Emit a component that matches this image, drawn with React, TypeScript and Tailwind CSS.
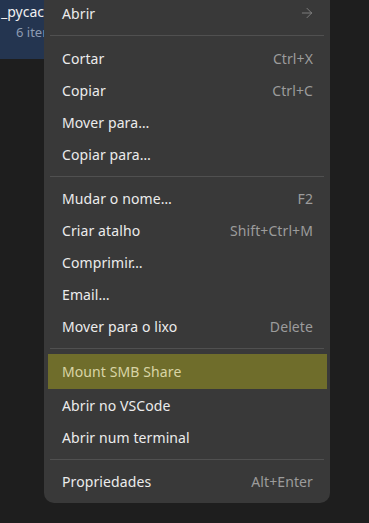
import { ArrowRight } from "lucide-react";

type Item = { label: string; shortcut?: string; active?: boolean; arrow?: boolean };

const groups: Item[][] = [
  [{ label: "Abrir", arrow: true }],
  [
    { label: "Cortar", shortcut: "Ctrl+X" },
    { label: "Copiar", shortcut: "Ctrl+C" },
    { label: "Mover para…" },
    { label: "Copiar para…" },
  ],
  [
    { label: "Mudar o nome…", shortcut: "F2" },
    { label: "Criar atalho", shortcut: "Shift+Ctrl+M" },
    { label: "Comprimir…" },
    { label: "Email…" },
    { label: "Mover para o lixo", shortcut: "Delete" },
  ],
  [
    { label: "Mount SMB Share", active: true },
    { label: "Abrir no VSCode" },
    { label: "Abrir num terminal" },
  ],
  [{ label: "Propriedades", shortcut: "Alt+Enter" }],
];

function Row({ item, first }: { item: Item; first?: boolean }) {
  return (
    <div
      className={`flex items-center justify-between px-[14px] text-[14px] tracking-[0.1px] ${
        first ? "h-[29px] pb-[3px]" : item.active ? "h-[35px]" : "h-[32px]"
      } ${item.active ? "bg-[#6f6d2b] text-[#d9d5a6]" : "text-[#ececec]"}`}
    >
      <span>{item.label}</span>
      {item.shortcut && <span className="text-[#9c9c9c]">{item.shortcut}</span>}
      {item.arrow && <ArrowRight size={16} strokeWidth={1.25} className="text-[#8a8a8a] -mr-[2px]" />}
    </div>
  );
}

export default function App() {
  return (
    <div
      className="w-[369px] h-[523px] bg-[#1e1e1e] flex overflow-hidden"
      style={{ fontFamily: '"Noto Sans", "Open Sans", sans-serif' }}
    >
      {/* folder tile behind the popover */}
      <div className="w-[44px] h-[59px] bg-[#243550] overflow-hidden shrink-0 text-[14px] leading-none">
        <div className="whitespace-nowrap pl-[1px] pt-[5px] text-[#f0f0f0]">_pycache__</div>
        <div className="whitespace-nowrap pl-[16px] pt-[7px] text-[13px] text-[#8d9bb2]">6 itens</div>
      </div>

      <div className="w-[286px] h-[503px] bg-[#393939] rounded-b-[10px] pl-[4px] pr-[3px] shrink-0">
        {groups.map((group, gi) => (
          <div key={gi}>
            {gi > 0 && (
              <div className={`flex items-center ${gi === 1 ? "h-[13px]" : gi === 3 ? "h-[12px]" : "h-[12px]"}`}>
                <div className="h-px ml-[2px] mr-[3px] w-full bg-[#505050]" />
              </div>
            )}
            {group.map((item) => (
              <Row key={item.label} item={item} first={gi === 0} />
            ))}
          </div>
        ))}
      </div>
    </div>
  );
}
